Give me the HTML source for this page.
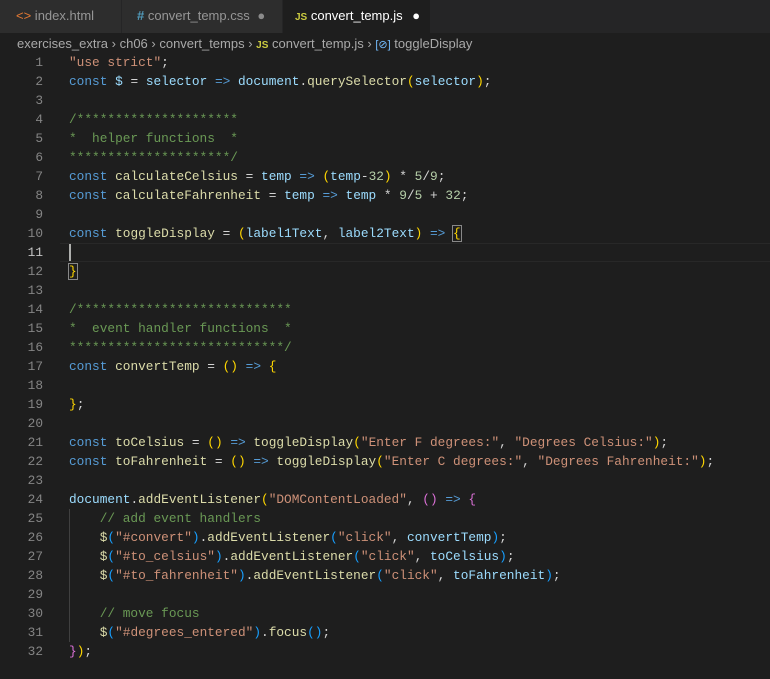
<!DOCTYPE html><html><head><style>
body{margin:0;width:770px;height:679px;background:#1e1e1e;overflow:hidden;font-family:"Liberation Sans",sans-serif}
.tabs{height:33px;background:#252526;position:relative}
.tab{position:absolute;top:0;height:33px;line-height:31px;font-size:13px;color:#969696;background:#2d2d2d;box-sizing:border-box;white-space:nowrap}
.crumb{height:21px;line-height:21px;font-size:13px;color:#a9a9a9;padding-left:17px;position:absolute;top:33px}
.code{position:absolute;top:53px;left:0;width:770px;font-family:"Liberation Mono",monospace;font-size:12.8px}
.l{height:19px;line-height:19px;position:relative;width:770px}
.n{position:absolute;left:0;width:43px;color:#858585;text-align:right}
.t{position:absolute;left:69px;color:#d4d4d4;white-space:pre}
.k{color:#569cd6}.v{color:#9cdcfe}.f{color:#dcdcaa}.s{color:#ce9178}.c{color:#6a9955}.m{color:#b5cea8}.y{color:#ffd700}.p{color:#da70d6}.b{color:#179fff}
</style></head><body>
<div class="tabs">
<div class="tab" style="left:0;width:121px;padding-left:16px"><span style="color:#e37933">&lt;&gt;</span> index.html</div>
<div class="tab" style="left:122px;width:160px;padding-left:15px"><span style="color:#519aba;font-weight:bold">#</span> convert_temp.css <span style="color:#8a8a8a;margin-left:4px">●</span></div>
<div class="tab" style="left:283px;width:147px;padding-left:12px;background:#1e1e1e;color:#fff"><span style="color:#cbcb41;font-size:10px;font-weight:bold">JS</span> convert_temp.js <span style="margin-left:6px">●</span></div>
</div>
<div class="crumb">exercises_extra › ch06 › convert_temps › <span style="color:#cbcb41;font-size:10px;font-weight:bold">JS</span> convert_temp.js › <span style="color:#75beff;font-size:11px">[⊘]</span> toggleDisplay</div>
<div style="position:absolute;top:243px;left:60px;width:710px;height:17px;border-top:1px solid #282828;border-bottom:1px solid #282828"></div>
<div style="position:absolute;top:509px;left:69px;width:1px;height:133px;background:#404040"></div>
<div class="code"><div class="l"><span class="n">1</span><span class="t"><span class="s">"use strict"</span>;</span></div><div class="l"><span class="n">2</span><span class="t"><span class="k">const</span> <span class="v">$</span> = <span class="v">selector</span> <span class="k">=&gt;</span> <span class="v">document</span>.<span class="f">querySelector</span><span class="y">(</span><span class="v">selector</span><span class="y">)</span>;</span></div><div class="l"><span class="n">3</span></div><div class="l"><span class="n">4</span><span class="t c">/*********************</span></div><div class="l"><span class="n">5</span><span class="t c">*  helper functions  *</span></div><div class="l"><span class="n">6</span><span class="t c">*********************/</span></div><div class="l"><span class="n">7</span><span class="t"><span class="k">const</span> <span class="f">calculateCelsius</span> = <span class="v">temp</span> <span class="k">=&gt;</span> <span class="y">(</span><span class="v">temp</span>-<span class="m">32</span><span class="y">)</span> * <span class="m">5</span>/<span class="m">9</span>;</span></div><div class="l"><span class="n">8</span><span class="t"><span class="k">const</span> <span class="f">calculateFahrenheit</span> = <span class="v">temp</span> <span class="k">=&gt;</span> <span class="v">temp</span> * <span class="m">9</span>/<span class="m">5</span> + <span class="m">32</span>;</span></div><div class="l"><span class="n">9</span></div><div class="l"><span class="n">10</span><span class="t"><span class="k">const</span> <span class="f">toggleDisplay</span> = <span class="y">(</span><span class="v">label1Text</span>, <span class="v">label2Text</span><span class="y">)</span> <span class="k">=&gt;</span> <span class="y" style="outline:1px solid #888">{</span></span></div><div class="l"><span class="n" style="color:#c6c6c6">11</span><span class="t" style="border-left:2px solid #aeafad;height:17px;top:1px"></span></div><div class="l"><span class="n">12</span><span class="t"><span class="y" style="outline:1px solid #888">}</span></span></div><div class="l"><span class="n">13</span></div><div class="l"><span class="n">14</span><span class="t c">/****************************</span></div><div class="l"><span class="n">15</span><span class="t c">*  event handler functions  *</span></div><div class="l"><span class="n">16</span><span class="t c">****************************/</span></div><div class="l"><span class="n">17</span><span class="t"><span class="k">const</span> <span class="f">convertTemp</span> = <span class="y">()</span> <span class="k">=&gt;</span> <span class="y">{</span></span></div><div class="l"><span class="n">18</span></div><div class="l"><span class="n">19</span><span class="t"><span class="y">}</span>;</span></div><div class="l"><span class="n">20</span></div><div class="l"><span class="n">21</span><span class="t"><span class="k">const</span> <span class="f">toCelsius</span> = <span class="y">()</span> <span class="k">=&gt;</span> <span class="f">toggleDisplay</span><span class="y">(</span><span class="s">"Enter F degrees:"</span>, <span class="s">"Degrees Celsius:"</span><span class="y">)</span>;</span></div><div class="l"><span class="n">22</span><span class="t"><span class="k">const</span> <span class="f">toFahrenheit</span> = <span class="y">()</span> <span class="k">=&gt;</span> <span class="f">toggleDisplay</span><span class="y">(</span><span class="s">"Enter C degrees:"</span>, <span class="s">"Degrees Fahrenheit:"</span><span class="y">)</span>;</span></div><div class="l"><span class="n">23</span></div><div class="l"><span class="n">24</span><span class="t"><span class="v">document</span>.<span class="f">addEventListener</span><span class="y">(</span><span class="s">"DOMContentLoaded"</span>, <span class="p">()</span> <span class="k">=&gt;</span> <span class="p">{</span></span></div><div class="l"><span class="n">25</span><span class="t c">    // add event handlers</span></div><div class="l"><span class="n">26</span><span class="t">    <span class="f">$</span><span class="b">(</span><span class="s">"#convert"</span><span class="b">)</span>.<span class="f">addEventListener</span><span class="b">(</span><span class="s">"click"</span>, <span class="v">convertTemp</span><span class="b">)</span>;</span></div><div class="l"><span class="n">27</span><span class="t">    <span class="f">$</span><span class="b">(</span><span class="s">"#to_celsius"</span><span class="b">)</span>.<span class="f">addEventListener</span><span class="b">(</span><span class="s">"click"</span>, <span class="v">toCelsius</span><span class="b">)</span>;</span></div><div class="l"><span class="n">28</span><span class="t">    <span class="f">$</span><span class="b">(</span><span class="s">"#to_fahrenheit"</span><span class="b">)</span>.<span class="f">addEventListener</span><span class="b">(</span><span class="s">"click"</span>, <span class="v">toFahrenheit</span><span class="b">)</span>;</span></div><div class="l"><span class="n">29</span></div><div class="l"><span class="n">30</span><span class="t c">    // move focus</span></div><div class="l"><span class="n">31</span><span class="t">    <span class="f">$</span><span class="b">(</span><span class="s">"#degrees_entered"</span><span class="b">)</span>.<span class="f">focus</span><span class="b">()</span>;</span></div><div class="l"><span class="n">32</span><span class="t"><span class="p">}</span><span class="y">)</span>;</span></div></div>
</body></html>
